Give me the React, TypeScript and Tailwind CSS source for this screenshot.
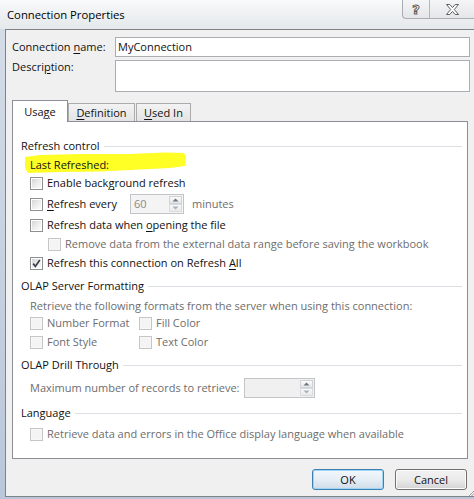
import React from "react";

function Check({ checked = false, disabled = false }: { checked?: boolean; disabled?: boolean }) {
  return (
    <span
      className={
        disabled
          ? "relative flex w-[13px] h-[13px] shrink-0 border border-[#c6c6c6] bg-[#f7f7f7] p-px"
          : "relative flex w-[13px] h-[13px] shrink-0 border border-[#8e8f8f] bg-white p-px"
      }
    >
      <span
        className={
          disabled ? "flex-1 bg-[#f4f4f4]" : "flex-1 bg-gradient-to-br from-[#d6d6d6] via-[#ececec] to-[#fbfbfb]"
        }
      />
      {checked && (
        <svg className="absolute left-0 top-0" width="11" height="11" viewBox="0 0 11 11">
          <path d="M2.2 5.6 L4.4 8.4 L8.8 1.9" fill="none" stroke="#3a3f4a" strokeWidth="1.7" />
        </svg>
      )}
    </span>
  );
}

function Header({ label, className }: { label: string; className: string }) {
  return (
    <div className={className}>
      <span className="leading-[18px] whitespace-nowrap">{label}</span>
      <span className="flex-1 h-px bg-[#dcdfe3] ml-[4px] mr-[5px]" />
    </div>
  );
}

function SpinArrow({ up }: { up: boolean }) {
  return (
    <svg width="7" height="4" viewBox="0 0 7 4">
      {up ? <path d="M0.5 3.5 L3.5 0.5 L6.5 3.5 Z" fill="#6b7585" /> : <path d="M0.5 0.5 L3.5 3.5 L6.5 0.5 Z" fill="#a9b0ba" />}
    </svg>
  );
}

function Spinner({ className, value }: { className: string; value: string }) {
  return (
    <div className={className}>
      <span className="flex-1 pl-[3px] leading-[18px] text-[#8a8a8a]">{value}</span>
      <div className="w-[15px] flex flex-col p-px">
        <div className="flex-1 flex items-center justify-center border border-[#cfd3d8] bg-gradient-to-b from-[#fbfbfb] to-[#e6e6e6]">
          <SpinArrow up={true} />
        </div>
        <div className="flex-1 flex items-center justify-center border border-[#d8dbdf] bg-gradient-to-b from-[#f8f8f8] to-[#eaeaea]">
          <SpinArrow up={false} />
        </div>
      </div>
    </div>
  );
}

export default function App() {
  return (
    <div className="w-[474px] h-[499px] flex flex-col overflow-hidden bg-gradient-to-b from-[#d5dde8] to-[#b9c7d9] font-['Open_Sans',sans-serif] text-[11px] text-[#111]">
      {/* title bar */}
      <div className="h-[29px] flex items-start bg-gradient-to-b from-[#f9fafb] via-[#eef0f2] to-[#e6e9ec]">
        <span className="pl-[7px] leading-[29px] text-[11.3px] text-black">Connection Properties</span>
        <div className="ml-auto flex h-[19px] w-[72px] border-l border-b border-[#a9adb3] rounded-bl-[4px] bg-gradient-to-b from-[#f4f5f6] to-[#e4e6e9]">
          <div className="w-[26px] flex items-center justify-center">
            <span className="font-['DejaVu_Sans',sans-serif] font-bold text-[13px] leading-[19px] text-white [-webkit-text-stroke:1px_#5c5c5c]">?</span>
          </div>
          <div className="flex-1 border-l border-[#b3b7bd] flex items-center justify-center">
            <svg width="13" height="11" viewBox="0 0 13 11">
              <polygon
                points="0.5,0.5 3.8,0.5 6.5,3.6 9.2,0.5 12.5,0.5 8.3,5.5 12.5,10.5 9.2,10.5 6.5,7.4 3.8,10.5 0.5,10.5 4.7,5.5"
                fill="#ffffff"
                stroke="#5e5e5e"
                strokeWidth="1"
              />
            </svg>
          </div>
        </div>
      </div>

      {/* client area */}
      <div className="relative flex-1 ml-[5px] mb-[2px] border-l border-t border-b border-[#7f8389] bg-[#f0f0f0] flex flex-col">
        {/* connection name */}
        <div className="flex items-center mt-[7px]">
          <div className="w-[109px] pl-[6px] leading-[18px] whitespace-nowrap">
            Connection <u className="underline-offset-2">n</u>ame:
          </div>
          <div className="w-[355px] h-[20px] border border-[#abadb3] bg-white flex items-center pl-[2px] leading-[18px]">
            MyConnection
          </div>
        </div>
        {/* description */}
        <div className="flex items-start mt-[3px]">
          <div className="w-[109px] pl-[6px] leading-[14px] whitespace-nowrap">
            Descri<u className="underline-offset-2">p</u>tion:
          </div>
          <div className="w-[355px] h-[32px] border border-[#abadb3] bg-white" />
        </div>

        {/* tabs */}
        <div className="flex items-end h-[21px] mt-[8px] ml-[6px]">
          <div className="relative z-10 w-[56px] h-[22px] -mb-[1px] border border-b-0 border-[#8c8f96] bg-white flex items-center justify-center pt-[1px] leading-[18px]">
            Usa<u className="underline-offset-2">g</u>e
          </div>
          <div className="w-[67px] h-[18px] border border-b-0 border-[#acacac] bg-gradient-to-b from-[#f3f3f3] to-[#e4e4e4] flex items-center justify-center pt-[1px] leading-[16px]">
            <u className="underline-offset-2">D</u>efinition
          </div>
          <div className="w-[55px] h-[18px] ml-px border border-b-0 border-[#acacac] bg-gradient-to-b from-[#f3f3f3] to-[#e4e4e4] flex items-center justify-center pt-[1px] leading-[16px]">
            <u className="underline-offset-2">U</u>sed In
          </div>
        </div>

        {/* panel */}
        <div className="ml-[6px] w-[456px] h-[338px] border border-[#8c8f96] bg-white flex flex-col">
          <Header label="Refresh control" className="flex items-center h-[18px] mt-[15px] pl-[8px]" />

          <div className="relative flex items-center h-[18px] mt-[1px] pl-[17px]">
            <svg className="absolute left-[10px] top-[-6px]" width="166" height="25" viewBox="0 0 166 25">
              <polygon
                points="2,7 17,5 57,4 107,4 142,2.5 161,3 163,7 162,16 147,18 117,19.5 77,21.5 37,22 5,23 2,18"
                fill="#ffff26"
              />
            </svg>
            <span className="relative leading-[18px]">Last Refreshed:</span>
          </div>

          <div className="flex items-center h-[18px] pl-[17px]">
            <Check />
            <span className="ml-[4px] leading-[18px]">
              Enable back<u className="underline-offset-2">g</u>round refresh
            </span>
          </div>

          <div className="flex items-center h-[20px] mt-[2px] pl-[17px]">
            <Check />
            <span className="ml-[4px] w-[83px] leading-[18px]">
              <u className="underline-offset-2">R</u>efresh every
            </span>
            <Spinner className="flex w-[54px] h-[20px] border border-[#c2c4c8] bg-[#f4f4f4]" value="60" />
            <span className="ml-[8px] leading-[18px] text-[#6d6d6d]">minutes</span>
          </div>

          <div className="flex items-center h-[18px] mt-[2px] pl-[17px]">
            <Check />
            <span className="ml-[4px] leading-[18px]">
              Refresh data when <u className="underline-offset-2">o</u>pening the file
            </span>
          </div>

          <div className="flex items-center h-[18px] mt-[1px] pl-[35px]">
            <Check disabled />
            <span className="ml-[4px] leading-[18px] text-[#6d6d6d]">
              Remove data from the external data range before saving the workbook
            </span>
          </div>

          <div className="flex items-center h-[18px] mt-[1px] pl-[17px]">
            <Check checked />
            <span className="ml-[4px] leading-[18px]">
              Refresh this connection on Refresh <u className="underline-offset-2">A</u>ll
            </span>
          </div>

          <Header label="OLAP Server Formatting" className="flex items-center h-[18px] mt-[5px] pl-[8px]" />

          <div className="flex items-center h-[17px] mt-[2px] pl-[17px] text-[#6d6d6d] leading-[17px]">
            Retrieve the following formats from the server when using this connection:
          </div>

          <div className="flex items-center h-[18px] pl-[17px] text-[#6d6d6d]">
            <div className="flex items-center w-[109px]">
              <Check disabled />
              <span className="ml-[4px] leading-[18px]">Number Format</span>
            </div>
            <Check disabled />
            <span className="ml-[4px] leading-[18px]">Fill Color</span>
          </div>

          <div className="flex items-center h-[18px] mt-[1px] pl-[17px] text-[#6d6d6d]">
            <div className="flex items-center w-[109px]">
              <Check disabled />
              <span className="ml-[4px] leading-[18px]">Font Style</span>
            </div>
            <Check disabled />
            <span className="ml-[4px] leading-[18px]">Text Color</span>
          </div>

          <Header label="OLAP Drill Through" className="flex items-center h-[18px] mt-[5px] pl-[8px]" />

          <div className="flex items-center h-[20px] mt-[4px] pl-[17px]">
            <span className="w-[214px] leading-[18px] text-[#6d6d6d] whitespace-nowrap">
              Maximum number of records to retrieve:
            </span>
            <Spinner className="flex w-[71px] h-[20px] border border-[#c2c4c8] bg-[#f0f0f0]" value="" />
          </div>

          <Header label="Language" className="flex items-center h-[18px] mt-[6px] pl-[8px]" />

          <div className="flex items-center h-[18px] mt-[3px] pl-[17px]">
            <Check disabled />
            <span className="ml-[4px] leading-[18px] text-[#6d6d6d]">
              Retrieve data and errors in the Office display language when available
            </span>
          </div>
        </div>

        {/* buttons */}
        <div className="flex justify-end gap-[11px] mt-[10px] pr-[7px]">
          <div className="w-[72px] h-[21px] rounded-[3px] border border-[#3c7fb1] bg-gradient-to-b from-[#f2f8fc] via-[#e6eef5] to-[#cfdde9] shadow-[inset_0_0_0_1px_#9fd5f6] flex items-center justify-center leading-[18px]">
            OK
          </div>
          <div className="w-[72px] h-[21px] rounded-[3px] border border-[#707070] bg-gradient-to-b from-[#f2f2f2] via-[#ebebeb] to-[#d4d4d4] shadow-[inset_0_0_0_1px_#fbfbfb] flex items-center justify-center leading-[18px]">
            Cancel
          </div>
        </div>

        <svg className="absolute right-0 bottom-0" width="6" height="6" viewBox="0 0 6 6">
          <path d="M6 1 L1 6 M6 3.5 L3.5 6" stroke="#a0a0a0" strokeWidth="1" />
        </svg>
      </div>
    </div>
  );
}
